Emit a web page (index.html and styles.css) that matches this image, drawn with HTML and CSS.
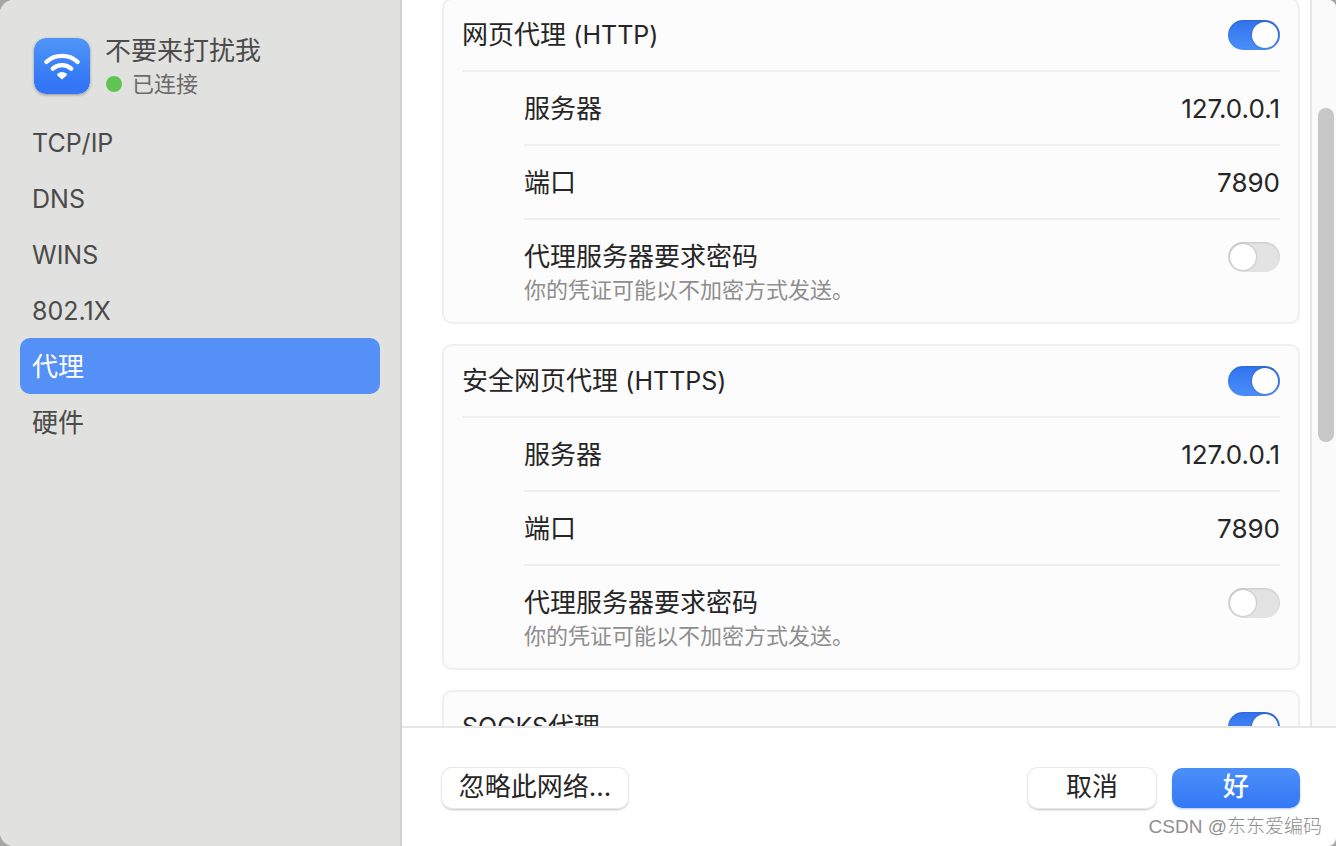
FILE: index.html
```html
<!DOCTYPE html>
<html lang="zh-CN">
<head>
<meta charset="utf-8">
<meta name="viewport" content="width=device-width, initial-scale=1">
<title>代理</title>
<link rel="stylesheet" href="styles.css">
</head>
<body>
<div class="window">
  <aside class="sidebar">
    <header class="network">
      <svg class="network-icon" viewBox="0 0 56 56" aria-hidden="true">
        <defs>
          <linearGradient id="tile" x1="0" y1="0" x2="0" y2="1">
            <stop offset="0" stop-color="#5096f8"/>
            <stop offset="0.75" stop-color="#3478f6"/>
            <stop offset="1" stop-color="#3375f5"/>
          </linearGradient>
        </defs>
        <rect width="56" height="56" rx="12" fill="url(#tile)"/>
        <g fill="none" stroke="#fff" stroke-width="4.4" stroke-linecap="round">
          <path d="M12.4 23.8a23.5 23.5 0 0 1 31.2 0"/>
          <path d="M18.8 30.6a14 14 0 0 1 18.4 0"/>
        </g>
        <path d="M28 41.6l-4.4-3.8q-1-1.200 0-2.200a6.600 6.600 0 0 1 8.800 0q1 1 0 2.200z" fill="#fff"/>
      </svg>
      <div class="network-text">
        <h1 class="network-name">不要来打扰我</h1>
        <p class="network-status"><span class="status-dot"></span>已连接</p>
      </div>
    </header>
    <nav class="nav">
      <a class="nav-item latin" href="#tcpip">TCP/IP</a>
      <a class="nav-item latin" href="#dns">DNS</a>
      <a class="nav-item latin" href="#wins">WINS</a>
      <a class="nav-item latin" href="#8021x">802.1X</a>
      <a class="nav-item nav-item-active" href="#proxies" aria-current="page">代理</a>
      <a class="nav-item" href="#hardware">硬件</a>
    </nav>
  </aside>

  <main class="main">
    <div class="scroll-area">
      <div class="cards">
        <section class="card">
          <div class="row row-head">
            <label for="http-on">网页代理 <span class="latin">(HTTP)</span></label>
            <input class="switch" id="http-on" type="checkbox" role="switch" checked>
          </div>
          <div class="row">
            <label for="http-host">服务器</label>
            <input class="field" id="http-host" type="text" value="127.0.0.1">
          </div>
          <div class="row">
            <label for="http-port">端口</label>
            <input class="field" id="http-port" type="text" value="7890">
          </div>
          <div class="row row-auth">
            <div>
              <label for="http-auth">代理服务器要求密码</label>
              <p class="hint">你的凭证可能以不加密方式发送。</p>
            </div>
            <input class="switch" id="http-auth" type="checkbox" role="switch">
          </div>
        </section>

        <section class="card">
          <div class="row row-head">
            <label for="https-on">安全网页代理 <span class="latin">(HTTPS)</span></label>
            <input class="switch" id="https-on" type="checkbox" role="switch" checked>
          </div>
          <div class="row">
            <label for="https-host">服务器</label>
            <input class="field" id="https-host" type="text" value="127.0.0.1">
          </div>
          <div class="row">
            <label for="https-port">端口</label>
            <input class="field" id="https-port" type="text" value="7890">
          </div>
          <div class="row row-auth">
            <div>
              <label for="https-auth">代理服务器要求密码</label>
              <p class="hint">你的凭证可能以不加密方式发送。</p>
            </div>
            <input class="switch" id="https-auth" type="checkbox" role="switch">
          </div>
        </section>

        <section class="card">
          <div class="row row-head">
            <label for="socks-on"><span class="latin">SOCKS</span>代理</label>
            <input class="switch" id="socks-on" type="checkbox" role="switch" checked>
          </div>
        </section>
      </div>
      <div class="scrollbar"><div class="thumb"></div></div>
    </div>

    <footer class="footer">
      <button class="button button-forget" type="button">忽略此网络...</button>
      <button class="button" type="button">取消</button>
      <button class="button button-primary" type="button">好</button>
    </footer>
  </main>
  <span class="watermark">CSDN @东东爱编码</span>
</div>
</body>
</html>
```

FILE: styles.css
```css
* {
  box-sizing: border-box;
}

body {
  margin: 0;
  background: #a6a6a4;
  color: #262626;
  font-family: Inter, "Noto Sans CJK SC", sans-serif;
  font-size: 26px;
  line-height: 36px;
}

h1,
p {
  margin: 0;
  font-weight: 400;
}

.window {
  position: relative;
  display: grid;
  grid-template-rows: minmax(0, 1fr);
  grid-template-columns: 402px minmax(0, 1fr);
  height: 100vh;
  overflow: hidden;
  border-radius: 14px 8px 8px 14px;
  background: #fff;
}

.latin {
  font-size: 25px;
}

/* Sidebar */
.sidebar {
  padding: 33px 20px 20px;
  border-right: 2px solid #d2d2d1;
  background: #e1e1df;
  color: #4b4b4a;
}

.network {
  display: flex;
  align-items: flex-start;
  gap: 15px;
  padding: 0 14px;
  height: 81px;
}

.network-icon {
  flex: none;
  width: 56px;
  height: 56px;
  margin-top: 5px;
  border-radius: 12px;
  box-shadow: 0 1px 3px rgba(0, 0, 0, 0.35);
}

.network-name {
  font-size: 26px;
  line-height: 36px;
}

.network-status {
  display: flex;
  align-items: center;
  gap: 10px;
  color: #6a6a69;
  font-size: 22px;
  line-height: 30px;
}

.status-dot {
  width: 16px;
  height: 16px;
  margin-left: 1px;
  border-radius: 50%;
  background: #5fc454;
}

.nav {
  display: flex;
  flex-direction: column;
}

.nav-item {
  padding: 11px 12px 9px;
  border-radius: 10px;
  color: inherit;
  text-decoration: none;
}

.nav-item-active {
  background: #5490f5;
  color: #fff;
}

/* Settings list */
.main {
  display: flex;
  flex-direction: column;
  min-width: 0;
}

.scroll-area {
  display: flex;
  flex: 1;
  min-height: 0;
  overflow: hidden;
}

.cards {
  display: flex;
  flex: 1;
  flex-direction: column;
  gap: 20px;
  min-width: 0;
  margin-top: -2px;
  padding: 0 10px 0 40px;
}

.card {
  flex: none;
  padding: 0 18px;
  border: 2px solid #efefef;
  border-radius: 10px;
  background: #fcfcfc;
}

.row {
  display: flex;
  align-items: center;
  justify-content: space-between;
  height: 74px;
  margin-left: 62px;
  padding-top: 2px;
  border-bottom: 2px solid #efefef;
}

.row-head {
  height: 72px;
  margin-left: 0;
  padding-top: 0;
}

.row-auth {
  align-items: flex-start;
  height: 102px;
  padding-top: 19px;
  border-bottom: 0;
}

.row-auth .switch {
  margin-top: 3px;
}

.row-auth label {
  display: block;
}

.hint {
  color: #8e8e8e;
  font-size: 22px;
  line-height: 30px;
}

.field {
  flex: 1;
  min-width: 0;
  padding: 0;
  border: 0;
  outline: 0;
  background: transparent;
  color: inherit;
  font: inherit;
  text-align: right;
}

.switch {
  flex: none;
  width: 52px;
  height: 30px;
  margin: 0;
  padding: 2px;
  border-radius: 15px;
  appearance: none;
  background: #e3e3e3;
  box-shadow: inset 0 1px 2px rgba(0, 0, 0, 0.12);
}

.switch::before {
  display: block;
  width: 26px;
  height: 26px;
  border-radius: 50%;
  background: #fff;
  box-shadow: 0 0 2px rgba(0, 0, 0, 0.35);
  content: "";
}

.switch:checked {
  padding-left: 24px;
  background: linear-gradient(#3273ee, #4a8ef8);
}

/* Scrollbar */
.scrollbar {
  width: 26px;
  padding: 108px 2px 0 6px;
  border-left: 2px solid #e6e6e6;
  background: #fafafa;
}

.thumb {
  height: 334px;
  border-radius: 8px;
  background: #c7c7c7;
}

/* Footer */
.footer {
  display: flex;
  flex: none;
  align-items: flex-start;
  gap: 16px;
  height: 120px;
  padding: 40px 36px 0 40px;
  border-top: 2px solid #e6e6e6;
}

.button {
  width: 128px;
  height: 40px;
  padding: 0 0 2px;
  border: 0;
  border-radius: 10px;
  background: #fff;
  box-shadow: 0 0 0 1px #e8e8e8, 0 2px 2px rgba(0, 0, 0, 0.25);
  color: inherit;
  font: inherit;
}

.button-forget {
  width: 186px;
  margin-right: auto;
}

.button-primary {
  background: linear-gradient(#4a8ff8, #3478f6);
  box-shadow: 0 1px 2px rgba(52, 120, 246, 0.4);
  color: #fff;
  font-weight: 500;
}

.watermark {
  position: absolute;
  right: 14px;
  bottom: 4px;
  color: #8f8f8f;
  font-family: "Liberation Sans", "Noto Sans CJK SC", sans-serif;
  font-size: 19px;
  font-weight: 300;
  line-height: 30px;
}
```
